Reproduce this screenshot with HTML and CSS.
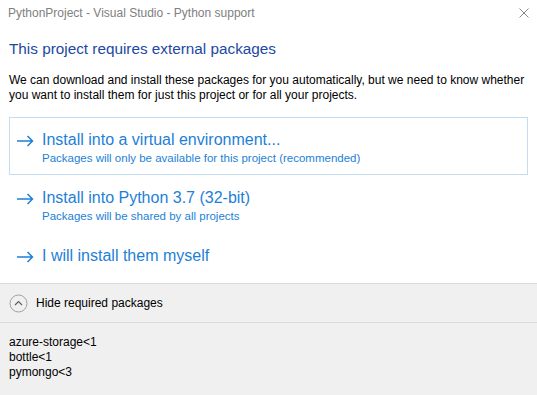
FILE: index.html
```html
<!DOCTYPE html>
<html lang="en">
<head>
    <meta charset="UTF-8">
    <title>PythonProject - Visual Studio - Python support</title>
    <link rel="stylesheet" href="styles.css">
</head>
<body>
    <div class="dialog">
        <header class="titlebar">
            <span class="titlebar-text">PythonProject - Visual Studio - Python support</span>
            <svg class="close" width="10" height="10" viewBox="0 0 10 10">
                <path d="M0.5 0.5 L9.5 9.5 M9.5 0.5 L0.5 9.5" stroke="#8a8a8a" stroke-width="1" fill="none"/>
            </svg>
        </header>

        <main class="content">
            <h1 class="heading">This project requires external packages</h1>
            <p class="intro">We can download and install these packages for you automatically, but we need to know whether you want to install them for just this project or for all your projects.</p>

            <div class="options">
                <div class="option selected">
                    <svg class="arrow" width="17" height="12" viewBox="0 0 17 12">
                        <path d="M0 6 H15.5 M10.5 1 L15.5 6 L10.5 11" stroke="#1e7fd6" stroke-width="1.5" fill="none"/>
                    </svg>
                    <div class="option-text">
                        <div class="option-title">Install into a virtual environment...</div>
                        <div class="option-sub">Packages will only be available for this project (recommended)</div>
                    </div>
                </div>
                <div class="option">
                    <svg class="arrow" width="17" height="12" viewBox="0 0 17 12">
                        <path d="M0 6 H15.5 M10.5 1 L15.5 6 L10.5 11" stroke="#1e7fd6" stroke-width="1.5" fill="none"/>
                    </svg>
                    <div class="option-text">
                        <div class="option-title">Install into Python 3.7 (32-bit)</div>
                        <div class="option-sub">Packages will be shared by all projects</div>
                    </div>
                </div>
                <div class="option">
                    <svg class="arrow" width="17" height="12" viewBox="0 0 17 12">
                        <path d="M0 6 H15.5 M10.5 1 L15.5 6 L10.5 11" stroke="#1e7fd6" stroke-width="1.5" fill="none"/>
                    </svg>
                    <div class="option-text">
                        <div class="option-title">I will install them myself</div>
                    </div>
                </div>
            </div>
        </main>

        <footer class="details">
            <div class="details-toggle">
                <svg class="toggle-icon" width="19" height="19" viewBox="0 0 19 19">
                    <circle cx="9.5" cy="9.5" r="8.5" stroke="#a0a0a0" stroke-width="1" fill="none"/>
                    <path d="M6 11 L9.5 7.5 L13 11" stroke="#606060" stroke-width="1.2" fill="none"/>
                </svg>
                <span>Hide required packages</span>
            </div>
            <ul class="packages">
                <li>azure-storage&lt;1</li>
                <li>bottle&lt;1</li>
                <li>pymongo&lt;3</li>
            </ul>
        </footer>
    </div>
</body>
</html>
```

FILE: styles.css
```css
/* base */
body {
    margin: 0;
    background-color: #ffffff;
    font-family: 'Liberation Sans', Arial, sans-serif;
    font-size: 12px;
    color: #000000;
}

.dialog {
    display: flex;
    flex-direction: column;
    min-height: 395px;
}

/* title bar */
.titlebar {
    display: flex;
    justify-content: space-between;
    align-items: center;
    height: 26px;
    padding: 0 8px 0 8px;
    color: #808080;
    font-size: 12px;
}

/* main area */
.content {
    padding: 0 9px;
}

.heading {
    margin: 12px 0 0;
    font-size: 15.3px;
    font-weight: normal;
    line-height: 22px;
    color: #1d48a3;
}

.intro {
    margin: 13px 0 14px;
    line-height: 15px;
}

.options {
    display: flex;
    flex-direction: column;
}

.option {
    display: flex;
    align-items: flex-start;
    gap: 8px;
    padding: 12px 7px 8px;
    border: 1px solid transparent;
    color: #1e7fd6;
}

.option.selected {
    border-color: #c2dcf2;
}

.arrow {
    margin-top: 5px;
    flex-shrink: 0;
}

.option-title {
    font-size: 16px;
    line-height: 20px;
}

.option-sub {
    font-size: 11.5px;
    line-height: 16px;
}

/* bottom panel */
.details {
    flex: 1;
    margin-top: 8px;
    background-color: #f0f0f0;
    border-top: 1px solid #dadada;
}

.details-toggle {
    display: flex;
    align-items: center;
    gap: 8px;
    height: 38px;
    padding: 0 9px;
    border-bottom: 1px solid #dadada;
}

.packages {
    list-style: none;
    margin: 0;
    padding: 12px 9px;
    line-height: 15px;
}
```
